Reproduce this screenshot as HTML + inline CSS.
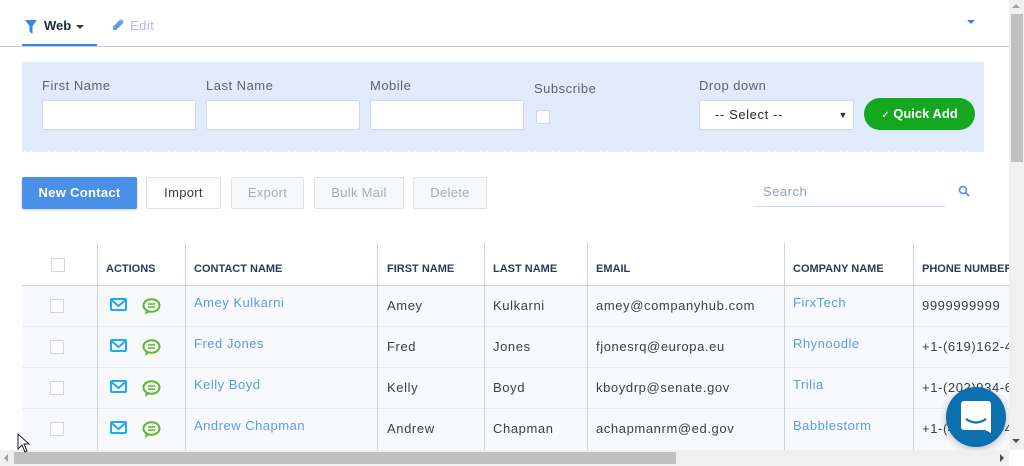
<!DOCTYPE html>
<html><head><meta charset="utf-8">
<style>
*{box-sizing:border-box;margin:0;padding:0}
body{width:1024px;height:466px;overflow:hidden;background:#fff;font-family:"Liberation Sans",sans-serif;position:relative;color:#333}
.a{position:absolute}
.lbl{font-size:13px;color:#5a6478;letter-spacing:0.5px}
.inp{background:#fff;border:1px solid #cfdbe8;border-radius:2px;height:30px}
.btn{position:absolute;top:177px;height:32px;border:1px solid #dde2e8;border-radius:2px;font-size:13px;text-align:center;line-height:30px;background:#f6f8fa;color:#a8adb3;letter-spacing:0.3px}
.th{position:absolute;top:263px;font-size:11px;font-weight:bold;color:#2f3b52;letter-spacing:0px}
.vl{position:absolute;top:243px;height:207px;width:1px;background:#ccd3dc}
.cell{position:absolute;font-size:13px;color:#3a3f48;letter-spacing:0.6px}
.lnk{position:absolute;font-size:13px;color:#5b9ce8;letter-spacing:0.5px}
.cb{position:absolute;left:50px;width:14px;height:14px;border:1px solid #d4d8de;background:#fff}
</style></head><body>
<svg class="a" style="left:25px;top:20px" width="12" height="14" viewBox="0 0 12 14"><path d="M0 0H12L7.5 6V14L4.5 11.5V6Z" fill="#3a86e0"/></svg>
<div class="a" style="left:44px;top:18px;font-size:13px;font-weight:bold;color:#1e2a3c">Web</div>
<svg class="a" style="left:76px;top:25px" width="8" height="5"><path d="M0 0H8L4 4Z" fill="#333"/></svg>
<div class="a" style="left:22px;top:44px;width:75px;height:3px;background:#3a86e0"></div>
<svg class="a" style="left:113px;top:19px" width="11" height="11" viewBox="0 0 11 11"><path d="M0 11V8.5L7 1.5L9.5 4L2.5 11Z M8 0.5L10.5 3" fill="#5b9ce8" stroke="#5b9ce8"/></svg>
<div class="a" style="left:130px;top:18px;font-size:13px;color:#a7bcf0;letter-spacing:0.5px">Edit</div>
<svg class="a" style="left:967px;top:20px" width="8" height="5"><path d="M0 0H8L4 4Z" fill="#3a86e0"/></svg>
<div class="a" style="left:0;top:46px;width:1009px;height:1px;background:#c5ced8"></div>
<div class="a" style="left:22px;top:62px;width:962px;height:90px;background:#e0ecfb"></div>
<svg class="a" style="left:22px;top:149px" width="962" height="5"><defs><pattern id="z" width="6" height="5" patternUnits="userSpaceOnUse"><path d="M0 5L3 2L6 5Z" fill="#fff"/></pattern></defs><rect width="962" height="5" fill="url(#z)"/></svg>
<div class="a lbl" style="left:42px;top:78px">First Name</div>
<div class="a lbl" style="left:206px;top:78px">Last Name</div>
<div class="a lbl" style="left:370px;top:78px">Mobile</div>
<div class="a lbl" style="left:534px;top:81px">Subscribe</div>
<div class="a lbl" style="left:699px;top:78px">Drop down</div>
<div class="a inp" style="left:42px;top:100px;width:154px"></div>
<div class="a inp" style="left:206px;top:100px;width:154px"></div>
<div class="a inp" style="left:370px;top:100px;width:154px"></div>
<div class="a" style="left:536px;top:110px;width:14px;height:14px;background:#fff;border:1px solid #cfd6de;border-radius:2px"></div>
<div class="a inp" style="left:699px;top:100px;width:155px;font-size:13px;color:#2a2f38;line-height:28px;padding-left:15px;letter-spacing:0.6px">-- Select --<span style="position:absolute;right:5px;top:0;font-size:9px">▼</span></div>
<div class="a" style="left:864px;top:98px;width:111px;height:32px;background:#14a820;border-radius:16px;color:#fff;font-size:13px;font-weight:bold;line-height:31px;text-align:center"><span style="font-size:10px;font-weight:normal">✓</span> Quick Add</div>
<div class="btn" style="left:22px;width:115px;background:#4a8fe8;border-color:#4a8fe8;color:#fff;font-weight:bold;box-shadow:0 1px 2px rgba(0,0,0,.2)">New Contact</div>
<div class="btn" style="left:146px;width:75px;background:#fff;color:#3a3f48">Import</div>
<div class="btn" style="left:231px;width:73px">Export</div>
<div class="btn" style="left:314px;width:90px">Bulk Mail</div>
<div class="btn" style="left:413px;width:74px">Delete</div>
<div class="a" style="left:763px;top:184px;font-size:13px;color:#9aa0a8;letter-spacing:0.5px">Search</div>
<div class="a" style="left:754px;top:206px;width:191px;height:1px;background:#c6daf0"></div>
<svg class="a" style="left:958px;top:185px" width="12" height="12" viewBox="0 0 12 12"><circle cx="5" cy="5" r="3.5" fill="none" stroke="#4a8fe8" stroke-width="1.6"/><path d="M7.5 7.5L11 11" stroke="#4a8fe8" stroke-width="1.8"/></svg>
<div class="a" style="left:22px;top:285px;width:987px;height:165px;background:#f7f9fc"></div>
<div class="a" style="left:22px;top:285px;width:987px;height:1px;background:#ccd3dc"></div>
<div class="a" style="left:22px;top:326px;width:987px;height:1px;background:#e8ecf1"></div>
<div class="a" style="left:22px;top:367px;width:987px;height:1px;background:#e8ecf1"></div>
<div class="a" style="left:22px;top:408px;width:987px;height:1px;background:#e8ecf1"></div>
<div class="vl" style="left:97px"></div><div class="vl" style="left:185px"></div><div class="vl" style="left:377px"></div><div class="vl" style="left:484px"></div><div class="vl" style="left:587px"></div><div class="vl" style="left:784px"></div><div class="vl" style="left:913px"></div>
<div class="cb" style="top:258px;left:51px"></div>
<div class="th" style="left:106px">ACTIONS</div>
<div class="th" style="left:194px">CONTACT NAME</div>
<div class="th" style="left:387px">FIRST NAME</div>
<div class="th" style="left:493px">LAST NAME</div>
<div class="th" style="left:596px">EMAIL</div>
<div class="th" style="left:793px">COMPANY NAME</div>
<div class="th" style="left:922px;white-space:nowrap">PHONE NUMBER</div>
<div class="cb" style="top:299px"></div><div class="cb" style="top:340px"></div><div class="cb" style="top:381px"></div><div class="cb" style="top:422px"></div>
<svg width="0" height="0" style="position:absolute"><defs>
<g id="m"><rect x="1" y="1" width="15" height="11" rx="1" fill="none" stroke="#22aaf0" stroke-width="2"/><path d="M1.5 2L8.5 8L15.5 2" fill="none" stroke="#22aaf0" stroke-width="2"/></g>
<g id="c"><ellipse cx="9.5" cy="7.5" rx="8" ry="6.3" fill="none" stroke="#5cb82a" stroke-width="2"/><path d="M4 12L3 17L8 13.5" fill="#5cb82a"/><path d="M6 6H13M6 9H13" stroke="#5cb82a" stroke-width="1.6"/></g>
</defs></svg>
<svg class="a" style="left:110px;top:298px" width="18" height="14"><use href="#m"/></svg><svg class="a" style="left:142px;top:298px" width="20" height="18"><use href="#c"/></svg>
<svg class="a" style="left:110px;top:339px" width="18" height="14"><use href="#m"/></svg><svg class="a" style="left:142px;top:339px" width="20" height="18"><use href="#c"/></svg>
<svg class="a" style="left:110px;top:380px" width="18" height="14"><use href="#m"/></svg><svg class="a" style="left:142px;top:380px" width="20" height="18"><use href="#c"/></svg>
<svg class="a" style="left:110px;top:421px" width="18" height="14"><use href="#m"/></svg><svg class="a" style="left:142px;top:421px" width="20" height="18"><use href="#c"/></svg>
<div class="lnk" style="left:194px;top:295px">Amey Kulkarni</div>
<div class="lnk" style="left:194px;top:336px">Fred Jones</div>
<div class="lnk" style="left:194px;top:377px">Kelly Boyd</div>
<div class="lnk" style="left:194px;top:418px">Andrew Chapman</div>
<div class="cell" style="left:387px;top:298px">Amey</div><div class="cell" style="left:493px;top:298px">Kulkarni</div><div class="cell" style="left:596px;top:298px">amey@companyhub.com</div>
<div class="cell" style="left:387px;top:339px">Fred</div><div class="cell" style="left:493px;top:339px">Jones</div><div class="cell" style="left:596px;top:339px">fjonesrq@europa.eu</div>
<div class="cell" style="left:387px;top:380px">Kelly</div><div class="cell" style="left:493px;top:380px">Boyd</div><div class="cell" style="left:596px;top:380px">kboydrp@senate.gov</div>
<div class="cell" style="left:387px;top:421px">Andrew</div><div class="cell" style="left:493px;top:421px">Chapman</div><div class="cell" style="left:596px;top:421px">achapmanrm@ed.gov</div>
<div class="lnk" style="left:793px;top:295px">FirxTech</div>
<div class="lnk" style="left:793px;top:336px">Rhynoodle</div>
<div class="lnk" style="left:793px;top:377px">Trilia</div>
<div class="lnk" style="left:793px;top:418px">Babblestorm</div>
<div class="cell" style="left:922px;top:298px;width:87px;overflow:hidden;white-space:nowrap">9999999999</div>
<div class="cell" style="left:922px;top:339px;width:87px;overflow:hidden;white-space:nowrap">+1-(619)162-4612</div>
<div class="cell" style="left:922px;top:380px;width:87px;overflow:hidden;white-space:nowrap">+1-(202)934-6123</div>
<div class="cell" style="left:922px;top:421px;width:87px;overflow:hidden;white-space:nowrap">+1-(415)123-4567</div>
<div class="a" style="left:946px;top:387px;width:60px;height:60px;border-radius:50%;background:#0c6fb0;box-shadow:0 2px 8px rgba(0,0,0,.25)"></div>
<svg class="a" style="left:961px;top:401px" width="30" height="32" viewBox="0 0 30 32"><path d="M3 0H27A3 3 0 0 1 30 3V32L24 29H3A3 3 0 0 1 0 26V3A3 3 0 0 1 3 0Z" fill="#fff"/><path d="M5 18Q15 25 25 18" fill="none" stroke="#0c6fb0" stroke-width="2.2"/></svg>
<div class="a" style="left:1009px;top:0;width:15px;height:450px;background:#f0f0f0"></div>
<div class="a" style="left:1011px;top:14px;width:12px;height:148px;background:#c1c1c1"></div>
<svg class="a" style="left:1012px;top:3px" width="9" height="6"><path d="M0 5H8L4 1Z" fill="#a3a3a3"/></svg>
<svg class="a" style="left:1012px;top:438px" width="9" height="6"><path d="M0 1H8L4 5Z" fill="#505050"/></svg>
<div class="a" style="left:0;top:450px;width:1009px;height:16px;background:#f0f0f0"></div>
<div class="a" style="left:14px;top:452px;width:662px;height:12px;background:#c1c1c1"></div>
<svg class="a" style="left:3px;top:454px" width="6" height="9"><path d="M5 0V8L1 4Z" fill="#a3a3a3"/></svg>
<svg class="a" style="left:999px;top:454px" width="6" height="9"><path d="M1 0V8L5 4Z" fill="#505050"/></svg>
<svg class="a" style="left:17px;top:433px" width="13" height="20"><path d="M1 1V16L5 12L8 19L10 18L7 11H12Z" fill="#fff" stroke="#222" stroke-width="1"/></svg>
</body></html>
